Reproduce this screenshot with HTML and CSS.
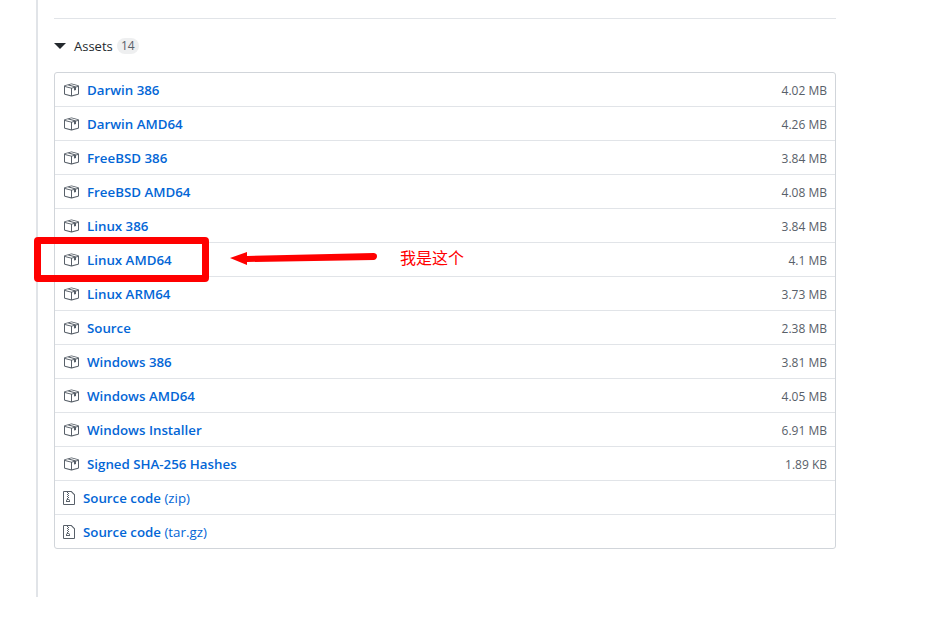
FILE: index.html
```html
<!DOCTYPE html>
<html lang="en">
<head>
<meta charset="utf-8">
<title>Assets</title>
<link rel="stylesheet" href="styles.css">
</head>
<body>
<svg class="sprite" width="0" height="0" aria-hidden="true">
  <symbol id="pkg" viewBox="0 0 16 16"><path fill-rule="evenodd" d="M1 4.27v7.47c0 .45.3.84.75.97l6.5 1.73c.16.05.34.05.5 0l6.5-1.73c.45-.13.75-.52.75-.97V4.27c0-.45-.3-.84-.75-.97l-6.5-1.74a1.4 1.4 0 00-.5 0L1.75 3.3c-.45.13-.75.52-.75.97zm7 9.09l-6-1.59V5l6 1.61v6.75zM2 4l2.5-.67L11 5.06l-2.5.67L2 4zm13 7.77l-6 1.59V6.61l2-.55V8.5l2-.53V5.53L15 5v6.77zm-2-7.24L6.5 2.8l2-.53L15 4l-2 .53z"/></symbol>
  <symbol id="zip" viewBox="0 0 12 16"><path fill-rule="evenodd" d="M8.5 1H1a1 1 0 00-1 1v12a1 1 0 001 1h10a1 1 0 001-1V4.5L8.5 1zM11 14H1V2h3v1h1V2h3l3 3v9zM5 4V3h1v1H5zM4 4h1v1H4V4zm1 2V5h1v1H5zM4 6h1v1H4V6zm1 2V7h1v1H5zM4 9.28A2 2 0 003 11v1h4v-1a2 2 0 00-2-2V8H4v1.28zM6 10v1H4v-1h2z"/></symbol>
</svg>
<main class="page">
  <div class="content">
    <hr class="divider">
    <div class="summary">
      <span class="caret"></span>
      <span class="title">Assets</span>
      <span class="counter">14</span>
    </div>
    <ul class="assets">
      <li class="row"><svg class="icon"><use href="#pkg"/></svg><a class="name">Darwin 386</a><span class="size">4.02 MB</span></li>
      <li class="row"><svg class="icon"><use href="#pkg"/></svg><a class="name">Darwin AMD64</a><span class="size">4.26 MB</span></li>
      <li class="row"><svg class="icon"><use href="#pkg"/></svg><a class="name">FreeBSD 386</a><span class="size">3.84 MB</span></li>
      <li class="row"><svg class="icon"><use href="#pkg"/></svg><a class="name">FreeBSD AMD64</a><span class="size">4.08 MB</span></li>
      <li class="row"><svg class="icon"><use href="#pkg"/></svg><a class="name">Linux 386</a><span class="size">3.84 MB</span></li>
      <li class="row"><svg class="icon"><use href="#pkg"/></svg><a class="name">Linux AMD64</a><span class="size">4.1 MB</span></li>
      <li class="row"><svg class="icon"><use href="#pkg"/></svg><a class="name">Linux ARM64</a><span class="size">3.73 MB</span></li>
      <li class="row"><svg class="icon"><use href="#pkg"/></svg><a class="name">Source</a><span class="size">2.38 MB</span></li>
      <li class="row"><svg class="icon"><use href="#pkg"/></svg><a class="name">Windows 386</a><span class="size">3.81 MB</span></li>
      <li class="row"><svg class="icon"><use href="#pkg"/></svg><a class="name">Windows AMD64</a><span class="size">4.05 MB</span></li>
      <li class="row"><svg class="icon"><use href="#pkg"/></svg><a class="name">Windows Installer</a><span class="size">6.91 MB</span></li>
      <li class="row"><svg class="icon"><use href="#pkg"/></svg><a class="name">Signed SHA-256 Hashes</a><span class="size">1.89 KB</span></li>
      <li class="row"><svg class="icon-zip"><use href="#zip"/></svg><a class="name">Source code <span class="ext">(zip)</span></a></li>
      <li class="row"><svg class="icon-zip"><use href="#zip"/></svg><a class="name">Source code <span class="ext">(tar.gz)</span></a></li>
    </ul>
  </div>
</main>
<div class="highlight"></div>
<svg class="arrow" width="150" height="16" viewBox="0 0 150 16" aria-hidden="true">
  <path d="M0 8 L17 2 L17 6 L144 3 Q147 3.6 147 6 Q147 9 144 10 L17 12 L17 15 Z" fill="#ff0000"/>
</svg>
<div class="note">我是这个</div>
</body>
</html>
```
FILE: styles.css
```css
html, body {
  margin: 0;
  padding: 0;
  background: #fff;
}
body {
  font-family: "Open Sans", "Liberation Sans", sans-serif;
  height: 623px;
  overflow: hidden;
  position: relative;
}
.sprite {
  position: absolute;
}
.page {
  margin-left: 36px;
  width: 800px;
  height: 597px;
  border-left: 2px solid #e1e4e8;
  box-sizing: border-box;
  padding-left: 16px;
}
.content {
  display: flex;
  flex-direction: column;
}
.divider {
  margin: 18px 0 0;
  border: 0;
  height: 1px;
  background: #e1e4e8;
}
.summary {
  display: flex;
  align-items: center;
  height: 16px;
  margin-top: 19px;
  color: #24292e;
}
.caret {
  width: 0;
  height: 0;
  border-left: 6px solid transparent;
  border-right: 6px solid transparent;
  border-top: 6px solid #24292e;
  margin-right: 8px;
}
.title {
  font-size: 13px;
  font-weight: 500;
  line-height: 16px;
}
.counter {
  margin-left: 4px;
  width: 22px;
  height: 16px;
  border-radius: 8px;
  background: #eeeff0;
  color: #586069;
  font-size: 12px;
  font-weight: 500;
  line-height: 16px;
  text-align: center;
}
.assets {
  list-style: none;
  margin: 18px 0 0;
  padding: 0;
  border: 1px solid #d1d5da;
  border-radius: 3px;
}
.row {
  display: flex;
  align-items: center;
  height: 34px;
  box-sizing: border-box;
  padding: 0 8px;
  border-top: 1px solid #e1e4e8;
}
.row:first-child {
  height: 33px;
  border-top: 0;
}
.icon {
  width: 16px;
  height: 16px;
  fill: #586069;
  margin-right: 8px;
  flex: none;
}
.icon-zip {
  width: 12px;
  height: 16px;
  fill: #586069;
  margin-right: 8px;
  flex: none;
}
.name {
  color: #0366d6;
  font-size: 13.3px;
  font-weight: 600;
}
.ext {
  font-weight: 400;
}
.size {
  margin-left: auto;
  padding-top: 2px;
  color: #586069;
  font-size: 12px;
}
.highlight {
  position: absolute;
  left: 34px;
  top: 237px;
  width: 175px;
  height: 45px;
  box-sizing: border-box;
  border: 7px solid #ff0000;
  border-radius: 4px;
}
.arrow {
  position: absolute;
  left: 230px;
  top: 250px;
}
.note {
  position: absolute;
  left: 400px;
  top: 246px;
  color: #ff0000;
  font-family: "Noto Sans CJK SC", sans-serif;
  font-size: 16px;
  font-weight: 400;
  line-height: 22px;
}
```
